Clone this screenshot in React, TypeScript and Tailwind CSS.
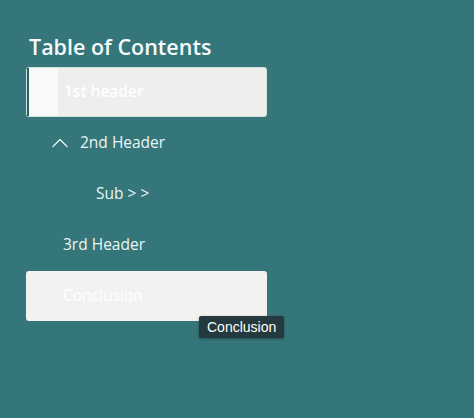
import { ChevronUp } from 'lucide-react'

const items = [
  { id: 'h1', label: '1st header', level: 0, chevron: true, active: true },
  { id: 'h2', label: '2nd Header', level: 1, chevron: true },
  { id: 'sub', label: 'Sub > >', level: 2 },
  { id: 'h3', label: '3rd Header', level: 0 },
  { id: 'concl', label: 'Conclusion', level: 0, hovered: true },
]

export default function App() {
  return (
    <div className="w-[474px] h-[418px] bg-[#35767a] pt-[33px] pl-[26px] font-['Open_Sans',sans-serif] overflow-hidden">
      <h1 className="pl-[3px] text-[21.5px] leading-[28px] font-semibold text-[#f4fafa]">Table of Contents</h1>
      <div className="mt-[6px] flex flex-col gap-px w-[241px]">
        {items.map((item) => {
          if (item.active) {
            return (
              <div
                key={item.id}
                className="h-[50px] flex items-stretch rounded-[3px] border border-[#cfe3e3] bg-[#eeeeed]"
              >
                <div className="w-[2px] bg-[#2c5d61]" />
                <div className="w-[29px] bg-[#f9f9f9] flex items-center justify-center">
                  <ChevronUp size={13} strokeWidth={1.5} className="text-white" />
                </div>
                <span className="ml-[6px] self-center text-[15.5px] font-semibold text-white">{item.label}</span>
              </div>
            )
          }
          if (item.hovered) {
            return (
              <div key={item.id} className="relative h-[50px] rounded-[3px] bg-[#f4f2f1] flex items-center pl-[37px]">
                <span className="text-[15.5px] text-white">{item.label}</span>
                <div className="absolute left-[173px] top-[45px] h-[22px] px-[8px] flex items-center bg-[#253a3e] rounded-[2px] shadow-[0_1px_3px_rgba(0,0,0,0.35)] font-['Liberation_Sans',sans-serif] text-[14px] text-white">
                  Conclusion
                </div>
              </div>
            )
          }
          return (
            <div
              key={item.id}
              className={
                item.level === 1
                  ? 'h-[50px] flex items-center pl-[20px] text-[15.5px] text-[#eaf5f5]'
                  : item.level === 2
                    ? 'h-[50px] flex items-center pl-[70px] text-[15.5px] text-[#eaf5f5]'
                    : 'h-[50px] flex items-center pl-[37px] text-[15.5px] text-[#eaf5f5]'
              }
            >
              {item.chevron && <ChevronUp size={28} strokeWidth={1.1} className="mr-[6px] text-[#e6f3f3]" />}
              <span>{item.label}</span>
            </div>
          )
        })}
      </div>
    </div>
  )
}
